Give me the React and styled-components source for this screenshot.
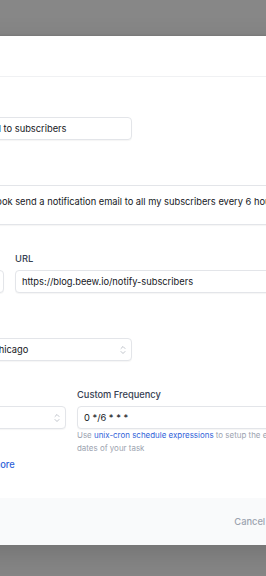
import React from "react";
import styled, { createGlobalStyle } from "styled-components";

const Global = createGlobalStyle`
  html, body {
    margin: 0;
    padding: 0;
    overflow: hidden;
    background: #878787;
    font-family: Inter, "Noto Sans", sans-serif;
  }
  * { box-sizing: border-box; }
`;

const Backdrop = styled.div`
  min-height: 100vh;
  padding-top: 36px;
  background: #878787;
`;

const Modal = styled.div`
  width: 400px;
  margin-left: -73px;
  background: #fff;
  border-radius: 6px;
  box-shadow: 0 -1px 2px rgba(0, 0, 0, 0.08), 0 10px 30px rgba(0, 0, 0, 0.15);
  overflow: hidden;
`;

const Header = styled.div`
  height: 41px;
  display: flex;
  align-items: center;
  justify-content: space-between;
  padding: 0 17px;
  border-bottom: 1px solid #f0f1f3;
`;

const Title = styled.h2`
  margin: 0;
  font-size: 8px;
  font-weight: 600;
  color: #111827;
`;

const Close = styled.button`
  border: none;
  background: transparent;
  color: #9ca3af;
  font-size: 12px;
  padding: 0;
`;

const Body = styled.div`
  padding: 23px 17px 27px;
  display: flex;
  flex-direction: column;
  gap: 28px;
`;

const Field = styled.div`
  display: flex;
  flex-direction: column;
  width: ${(p) => p.$width || "auto"};
`;

const Label = styled.label`
  font-size: 9.3px;
  line-height: 12px;
  font-weight: 500;
  color: #374151;
  margin-bottom: 5px;
  white-space: nowrap;
`;

const controlBase = `
  border: 1px solid #e3e5e9;
  border-radius: 4px;
  background: #fff;
  box-shadow: 0 1px 1px rgba(0, 0, 0, 0.04);
  font-family: Inter, "Noto Sans", sans-serif;
  font-size: 9.3px;
  color: #16181d;
  outline: none;
  width: 100%;
`;

const Input = styled.input`
  ${controlBase}
  height: 23px;
  padding: 0 6px;
  text-indent: ${(p) => p.$indent || "0"};
`;

const TextArea = styled.textarea`
  ${controlBase}
  height: 40px;
  padding: 9px 6px 5px;
  line-height: 14px;
  resize: none;
  white-space: nowrap;
  overflow: hidden;
`;

const SelectBox = styled.div`
  ${controlBase}
  height: 23px;
  padding: 0 5px 0 7px;
  display: flex;
  align-items: center;
  justify-content: space-between;
  white-space: nowrap;
`;

const Chevrons = styled.svg`
  width: 6px;
  height: 10px;
  flex: none;
  color: #b9bdc5;
`;

const Row = styled.div`
  display: grid;
  grid-template-columns: ${(p) => p.$cols};
  column-gap: 11px;
  align-items: start;
`;

const Help = styled.p`
  margin: 0;
  font-size: 7.95px;
  line-height: 13px;
  color: #9ca3af;
`;

const Link = styled.a`
  color: #2f62d9;
  text-decoration: none;
  font-weight: ${(p) => (p.$strong ? 500 : 400)};
`;

const MoreRow = styled.div`
  margin-top: -24px;
  font-size: 9.3px;
  line-height: 12px;
  white-space: nowrap;
`;

const Footer = styled.div`
  height: 47px;
  background: #f9fafb;
  display: flex;
  align-items: center;
  justify-content: flex-end;
  gap: 6px;
  padding: 0 17px;
`;

const Button = styled.button`
  font-family: Inter, "Noto Sans", sans-serif;
  font-size: 9.3px;
  font-weight: 500;
  height: 24px;
  padding: ${(p) => (p.$primary ? "0 7px" : "0 3px")};
  border-radius: 4px;
  border: none;
  cursor: pointer;
  color: ${(p) => (p.$primary ? "#fff" : "#9ca3af")};
  background: ${(p) => (p.$primary ? "#2f62d9" : "transparent")};
`;

function Select({ value }) {
  return (
    <SelectBox>
      <span>{value}</span>
      <Chevrons viewBox="0 0 6 10" fill="none">
        <path d="M1 3.5 L3 1.5 L5 3.5" stroke="currentColor" strokeWidth="0.9" strokeLinecap="round" strokeLinejoin="round" />
        <path d="M1 6.5 L3 8.5 L5 6.5" stroke="currentColor" strokeWidth="0.9" strokeLinecap="round" strokeLinejoin="round" />
      </Chevrons>
    </SelectBox>
  );
}

export default function App() {
  return (
    <>
      <Global />
      <Backdrop>
        <Modal>
          <Header>
            <Title>Edit task</Title>
            <Close aria-label="Close">×</Close>
          </Header>
          <Body>
            <Field $width="188px">
              <Label>Name</Label>
              <Input readOnly $indent="1.5px" value="Send email to subscribers" />
            </Field>
            <Field>
              <Label>Description</Label>
              <TextArea
                readOnly
                value="This webhook send a notification email to all my subscribers every 6 hours"
              />
            </Field>
            <Row $cols="60px 1fr">
              <Field>
                <Label>Verb</Label>
                <Select value="POST" />
              </Field>
              <Field>
                <Label>URL</Label>
                <Input readOnly value="https://blog.beew.io/notify-subscribers" />
              </Field>
            </Row>
            <Field $width="188px">
              <Label>Zone</Label>
              <Select value="America/Chicago" />
            </Field>
            <Row $cols="122px 1fr">
              <Field>
                <Label>Every</Label>
                <Select value="Custom" />
              </Field>
              <Field>
                <Label>Custom Frequency</Label>
                <Input readOnly value="0 */6 * * *" />
                <Help>
                  Use <Link href="#">unix-cron schedule expressions</Link> to setup the execution
                  dates of your task
                </Help>
              </Field>
            </Row>
            <MoreRow>
              <Link href="#" $strong>+ Show 12 more</Link>
            </MoreRow>
          </Body>
          <Footer>
            <Button>Cancel</Button>
            <Button $primary>Save</Button>
          </Footer>
        </Modal>
      </Backdrop>
    </>
  );
}
